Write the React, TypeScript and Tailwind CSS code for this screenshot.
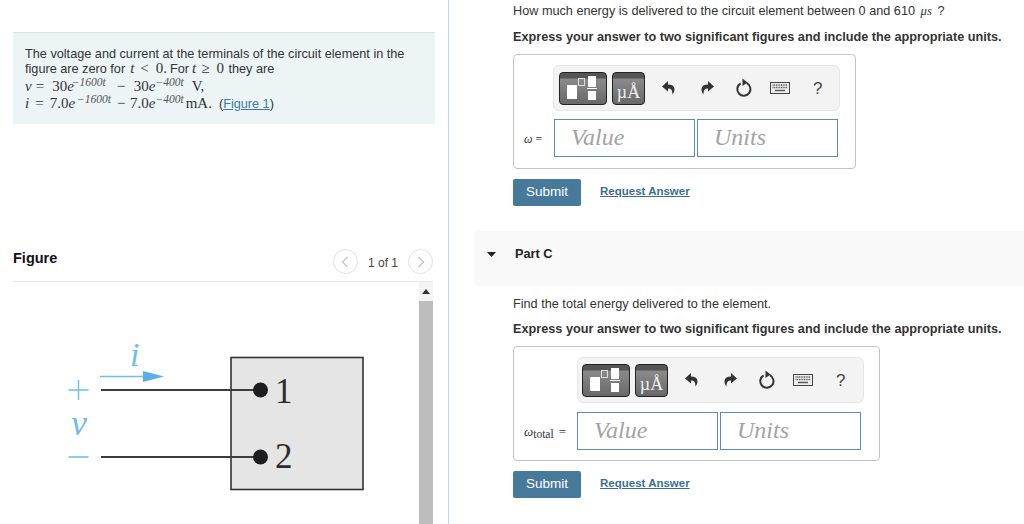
import React from "react";

const sans = "font-['Liberation_Sans',Arial,sans-serif]";
const serif = "font-['Liberation_Serif','Times_New_Roman',serif]";

function TemplateButton() {
  return (
    <div className="h-[33px] w-[48px] rounded-[4px] border border-[#222] bg-[linear-gradient(#555_0,#555_16%,#8a8a8a_20%,#686868_100%)]">
      <svg width="46" height="31" viewBox="0 0 46 31" className="block">
        <rect x="7" y="12" width="10" height="14" fill="#fff" />
        <rect x="18.5" y="5.5" width="6" height="7" fill="none" stroke="#ddd" />
        <rect x="28" y="3" width="8" height="11" fill="#fff" />
        <rect x="27" y="15" width="10" height="1" fill="#fff" />
        <rect x="28" y="18" width="8" height="9" fill="#fff" />
      </svg>
    </div>
  );
}

function UnitButton() {
  return (
    <div className={`flex h-[33px] w-[33px] items-end justify-center rounded-[4px] border border-[#222] bg-[linear-gradient(#555_0,#555_16%,#8a8a8a_20%,#686868_100%)] pb-[3px] text-[18px] leading-[18px] text-[#f0f0f0] ${serif}`}>
      µÅ
    </div>
  );
}

function Undo({ flip }: { flip?: boolean }) {
  return (
    <svg width="14" height="14" viewBox="0 0 14 14" className={flip ? "-scale-x-100" : ""}>
      <path d="M6 0 L0 5.5 L6 10.5 V7.5 C9 7.5 10.5 9 10.5 13.5 C13.5 10 14 3.5 6 3.5 Z" fill="#333" />
    </svg>
  );
}

function Reset() {
  return (
    <svg width="18" height="20" viewBox="0 0 18 20">
      <path d="M11.8 5.2 A6.6 6.6 0 1 1 5.6 5.4" fill="none" stroke="#333" strokeWidth="2" />
      <path d="M8 1 L8 8.4 L13 5 Z" fill="#333" transform="translate(-0.5 -0.5)" />
    </svg>
  );
}

function Keyboard() {
  return (
    <svg width="20" height="12" viewBox="0 0 20 12">
      <rect x="0.5" y="0.5" width="19" height="11" fill="#eee" stroke="#444" />
      <path d="M2.5 3 H17.5 M2.5 5.5 H17.5" stroke="#555" strokeWidth="1.4" strokeDasharray="1 0.7" />
      <path d="M5 8.5 H15" stroke="#555" strokeWidth="1.4" />
    </svg>
  );
}

function Toolbar({ pad }: { pad: string }) {
  return (
    <div className={`flex h-[46px] w-[287px] items-center rounded-[6px] border border-[#e6e6e6] bg-[#f3f3f3] ${pad}`}>
      <TemplateButton />
      <div className="ml-[5px]"><UnitButton /></div>
      <div className="ml-[17px] flex w-[14px] justify-center"><Undo /></div>
      <div className="ml-[24px] flex w-[14px] justify-center"><Undo flip /></div>
      <div className="ml-[21px] flex w-[18px] justify-center"><Reset /></div>
      <div className="ml-[17px] flex w-[20px] justify-center"><Keyboard /></div>
      <div className={`ml-[23px] text-[17px] leading-none text-[#444] ${sans}`}>?</div>
    </div>
  );
}

function Field({ label, width }: { label: string; width: string }) {
  return (
    <div className={`flex h-[38px] items-center border border-[#5a8fae] pb-[2px] pl-[16px] text-[24px] italic text-[#a3a3a3] ${serif} ${width}`}>
      {label}
    </div>
  );
}

function AnswerBox({ toolIndent, toolPad, inputIndent, width, gap }: { toolIndent: string; toolPad: string; inputIndent: string; width: string; gap: string }) {
  return (
    <div className={`flex flex-col rounded-[4px] border border-[#c4c4c4] pt-[10px] ${gap} ${width}`}>
      <div className={`flex ${toolIndent}`}>
        <Toolbar pad={toolPad} />
      </div>
      <div className={`flex gap-[2px] ${inputIndent}`}>
        <Field label="Value" width="w-[141px]" />
        <Field label="Units" width="w-[141px]" />
      </div>
    </div>
  );
}

function Actions() {
  return (
    <div className="mt-[10px] flex items-center">
      <div className="flex h-[27px] w-[68px] items-center justify-center rounded-[2px] bg-[#47799b] text-[13.5px] text-white">Submit</div>
      <a className="mb-[2px] ml-[19px] text-[11.5px] font-bold text-[#3a6f94] underline">Request Answer</a>
    </div>
  );
}

function Sup({ children, className = "" }: { children: React.ReactNode; className?: string }) {
  return <span className={`relative -top-[5px] text-[11.5px] text-[#555] italic ${className}`}>{children}</span>;
}

function Figure() {
  const blue = "#6ebcf0";
  const serifFamily = "'Liberation Serif', serif";
  return (
    <svg width="400" height="242" viewBox="0 0 400 242" className="block">
      <g transform="translate(0 -282)">
        <rect x="231" y="357.5" width="132" height="132" fill="#e5e5e5" stroke="#333" strokeWidth="1.6" />
        <path d="M101 390 H258 M101 457 H258" stroke="#3c3c3c" strokeWidth="2" />
        <circle cx="260.5" cy="390" r="7.5" fill="#1d1d1f" />
        <circle cx="260.5" cy="457" r="7.5" fill="#1d1d1f" />
        <text x="275" y="403" fontFamily={serifFamily} fontSize="35" fill="#2c2c2c">1</text>
        <text x="275" y="468" fontFamily={serifFamily} fontSize="35" fill="#2c2c2c">2</text>
        <path d="M100 376.5 H146" stroke={blue} strokeWidth="1.4" />
        <path d="M143 371 L164 376.5 L143 382 Z" fill="#5aaeea" />
        <text x="130" y="366" fontFamily={serifFamily} fontSize="34" fontStyle="italic" fill={blue}>i</text>
        <path d="M68.5 390 H88.5 M78.5 380 V400 M68.5 457 H88.5" stroke={blue} strokeWidth="1.4" />
        <text x="71" y="435" fontFamily={serifFamily} fontSize="36" fontStyle="italic" fill={blue}>v</text>
      </g>
    </svg>
  );
}

export default function App() {
  return (
    <div className={`flex h-[524px] w-[1024px] overflow-hidden bg-white text-[12.7px] text-[#333] ${sans}`}>
      <div className="flex h-full w-[449px] shrink-0 flex-col border-r border-[#c5d4e6] pl-[13px]">
        <div className="mt-[32px] h-[92px] w-[422px] border-t border-[#dfe3e5] bg-[#ecf4f6] px-[12px] pt-[13px]">
          <div className="h-[14px] leading-[16px]">The voltage and current at the terminals of the circuit element in the</div>
          <div className="h-[18px] leading-[16px]">
            figure are zero for
            <span className={`${serif} ml-[5px] text-[15px] italic`}>t</span>
            <span className={`${serif} ml-[6px] text-[15px]`}>&lt;</span>
            <span className={`${serif} ml-[7px] text-[15px]`}>0.</span>
            <span className="ml-[3px]">For</span>
            <span className={`${serif} ml-[3px] text-[15px] italic`}>t</span>
            <span className={`${serif} ml-[5px] text-[15px]`}>≥</span>
            <span className={`${serif} ml-[7px] text-[15px]`}>0</span>
            <span className="ml-[4.5px]">they are</span>
          </div>
          <div className={`${serif} h-[17px] text-[15px] leading-[16px]`}>
            <i>v</i><span className="ml-[4px]">=</span><span className="ml-[8px]">30</span><i>e</i><Sup className="-ml-[2px]">−1600t</Sup><span className="ml-[11px]">−</span><span className="ml-[8.5px]">30</span><i>e</i><Sup>−400t</Sup><span className="ml-[8px]">V,</span>
          </div>
          <div className={`${serif} h-[17px] text-[15px] leading-[16px]`}>
            <i>i</i><span className="ml-[6px]">=</span><span className="ml-[6px]">7.0</span><i>e</i><Sup className="ml-[2px]">−1600t</Sup><span className="ml-[6px]">−</span><span className="ml-[4.5px]">7.0</span><i>e</i><Sup>−400t</Sup><span className="ml-[2px]">mA.</span><span className={`${sans} ml-[7px] text-[12.7px]`}>(<a className="text-[#3a7ca5] underline">Figure 1</a>)</span>
          </div>
        </div>

        <div className="mt-[123px] flex h-[35px] w-[420px] items-start justify-between border-b border-[#eaeaea]">
          <div className="text-[14.5px] leading-[22px] font-bold text-[#111]">Figure</div>
          <div className="mt-[2px] flex items-center text-[12px] text-[#444]">
            <div className="flex h-[25px] w-[25px] items-center justify-center rounded-full border border-[#e2e2e2]">
              <svg width="8" height="12" viewBox="0 0 8 12"><path d="M6.5 1 L1.5 6 L6.5 11" fill="none" stroke="#c4c4c4" strokeWidth="1.3" /></svg>
            </div>
            <div className="mx-[10px] pt-[3px]">1 of 1</div>
            <div className="flex h-[25px] w-[25px] items-center justify-center rounded-full border border-[#e2e2e2]">
              <svg width="8" height="12" viewBox="0 0 8 12"><path d="M1.5 1 L6.5 6 L1.5 11" fill="none" stroke="#c4c4c4" strokeWidth="1.3" /></svg>
            </div>
          </div>
        </div>

        <div className="flex min-h-0 w-[420px] flex-1 justify-between">
          <div className="-ml-[13px]"><Figure /></div>
          <div className="flex w-[14.5px] shrink-0 flex-col">
            <div className="flex h-[19px] items-center justify-center bg-[#f4f4f4]">
              <svg width="8" height="5" viewBox="0 0 8 5"><path d="M4 0 L8 5 H0 Z" fill="#333" /></svg>
            </div>
            <div className="flex-1 bg-[#bdbdbd]" />
          </div>
        </div>
      </div>

      <div className="flex h-full min-w-0 flex-1 flex-col">
        <div className="ml-[64px] pt-[3px] leading-[16px]">How much energy is delivered to the circuit element between 0 and 610 <span className={`${serif} ml-[2px] italic`}>μs</span> <span className="ml-[2px]">?</span></div>
        <div className="mt-[10px] ml-[64px] leading-[16px] font-bold">Express your answer to two significant figures and include the appropriate units.</div>
        <div className="mt-[9px] ml-[64px]">
          <div className="relative">
            <AnswerBox toolIndent="pl-[39px]" toolPad="pl-[5px]" inputIndent="pl-[40px]" width="w-[343px]" gap="gap-[8px] pb-[11px]" />
            <div className={`absolute top-[76px] left-[11px] text-[12px] text-[#333] ${serif}`}><i>ω</i> =</div>
          </div>
          <Actions />
        </div>

        <div className="mt-[25px] ml-[25px] flex h-[55px] bg-[#f9f9f9] pt-[15px]">
          <svg width="9" height="5" viewBox="0 0 9 5" className="mt-[6px] ml-[13px]"><path d="M0 0 H9 L4.5 5 Z" fill="#222" /></svg>
          <div className="ml-[19px] leading-[16px] font-semibold text-[#222]">Part C</div>
        </div>

        <div className="mt-[10px] ml-[64px] leading-[16px]">Find the total energy delivered to the element.</div>
        <div className="mt-[9px] ml-[64px] leading-[16px] font-bold">Express your answer to two significant figures and include the appropriate units.</div>
        <div className="mt-[9px] ml-[64px]">
          <div className="relative">
            <AnswerBox toolIndent="pl-[63px]" toolPad="pl-[4px]" inputIndent="pl-[63px]" width="w-[367px]" gap="gap-[9px] pb-[10px]" />
            <div className={`absolute top-[76px] left-[11px] text-[13px] text-[#333] ${serif}`}><i>ω</i><span className="relative top-[2px] text-[11.5px]">total</span><span className="ml-[5px]">=</span></div>
          </div>
          <Actions />
        </div>
      </div>
    </div>
  );
}
